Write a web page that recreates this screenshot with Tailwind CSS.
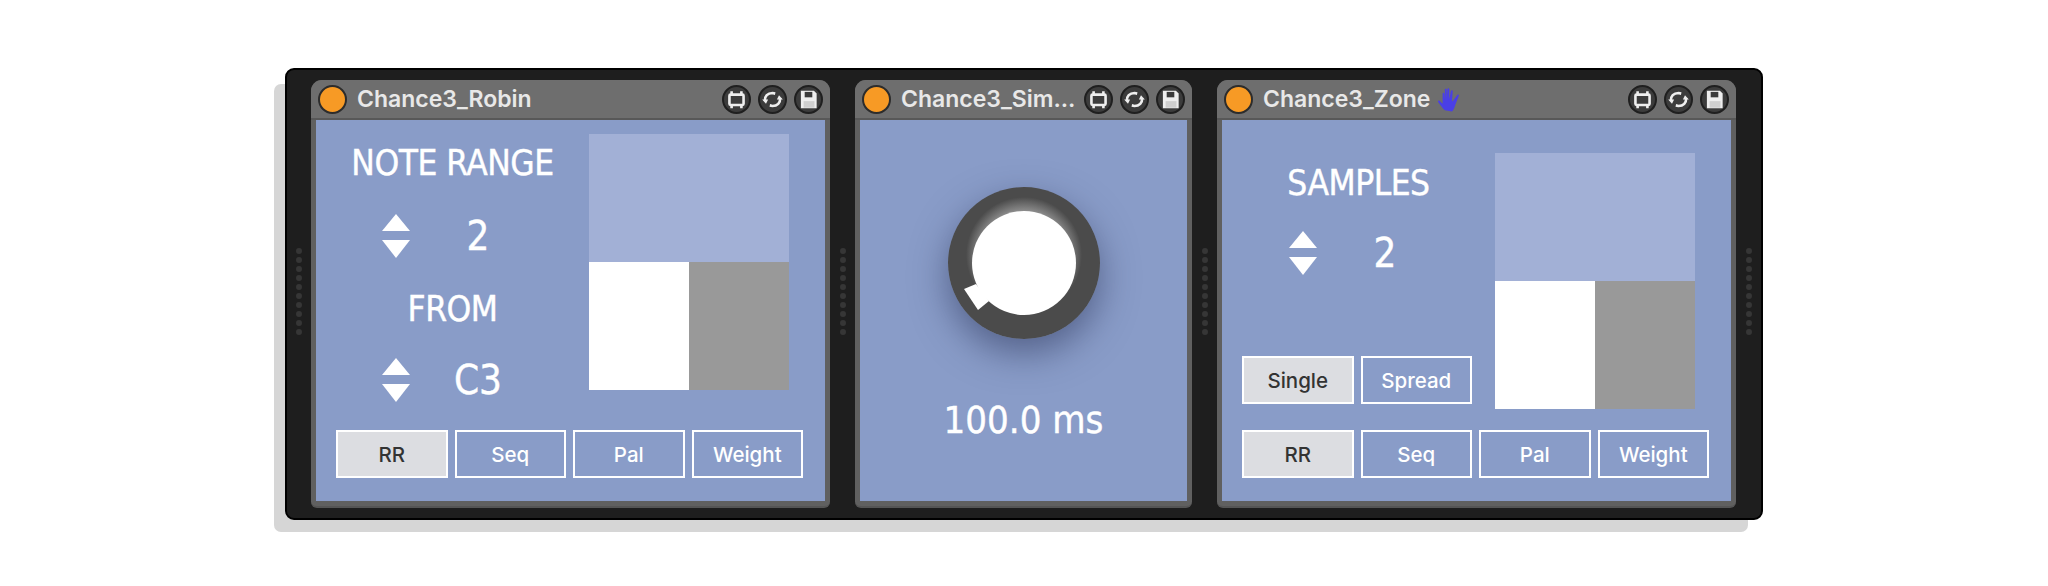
<!DOCTYPE html>
<html lang="en">
<head>
<meta charset="UTF-8">
<title>Chance3 devices</title>
<script src="https://cdn.jsdelivr.net/npm/@tailwindcss/browser@4"></script>
</head>
<body class="bg-white w-[2048px] h-[586px] overflow-hidden font-['Inter',sans-serif]">

<!-- shared icons -->
<svg width="0" height="0" class="absolute">
  <symbol id="ico-freeze" viewBox="3 3 23 23">
    <rect x="8" y="10" width="13" height="9.5" rx="1" fill="none" stroke="#eee" stroke-width="2.4"/>
    <path d="M10 7v3M19 7v3M10 19.500v3M19 19.500v3" stroke="#eee" stroke-width="2.400"/>
  </symbol>
  <symbol id="ico-sync" viewBox="3 3 23 23">
    <path d="M7.500 15.500c-.3-4 2.500-7 7-7l2.500.6" fill="none" stroke="#eee" stroke-width="2.400"/>
    <path d="M5 14.500l5.500 0-2 3.800z" fill="#eee"/>
    <path d="M21.500 13.500c.3 4-2.500 7-7 7l-2.500-.6" fill="none" stroke="#eee" stroke-width="2.400"/>
    <path d="M24 14.500l-5.500 0 2-3.800z" fill="#eee"/>
  </symbol>
  <symbol id="ico-save" viewBox="3 3 23 23">
    <path d="M7.500 6.500h12l2.500 2.500v13.500h-14.500z" fill="#eee"/>
    <rect x="11" y="7.500" width="7" height="5" fill="#3a3a3a"/>
    <rect x="10" y="16" width="10" height="6" fill="#cfcfcf"/>
  </symbol>
  <symbol id="ico-spin" viewBox="0 0 28 44">
    <path d="M14 0L28 17H0z" fill="#fff"/>
    <path d="M0 26H28L14 44z" fill="#fff"/>
  </symbol>
</svg>

<div class="ml-[285px] mt-[68px] w-[1478px] h-[452px] flex gap-[25px] pl-[24px] pt-[10px] bg-[#1e1e1e] border-2 border-black rounded-[9px] shadow-[-13px_14px_0_-2px_#d6d6d6] relative">

  <!-- grips -->
  <div class="absolute left-[9px] top-[178px] flex flex-col gap-[3px]">
    <i class="block w-[6px] h-[6px] rounded-full bg-[#363636]"></i><i class="block w-[6px] h-[6px] rounded-full bg-[#363636]"></i><i class="block w-[6px] h-[6px] rounded-full bg-[#363636]"></i><i class="block w-[6px] h-[6px] rounded-full bg-[#363636]"></i><i class="block w-[6px] h-[6px] rounded-full bg-[#363636]"></i><i class="block w-[6px] h-[6px] rounded-full bg-[#363636]"></i><i class="block w-[6px] h-[6px] rounded-full bg-[#363636]"></i><i class="block w-[6px] h-[6px] rounded-full bg-[#363636]"></i><i class="block w-[6px] h-[6px] rounded-full bg-[#363636]"></i><i class="block w-[6px] h-[6px] rounded-full bg-[#363636]"></i>
  </div>
  <div class="absolute left-[553px] top-[178px] flex flex-col gap-[3px]">
    <i class="block w-[6px] h-[6px] rounded-full bg-[#363636]"></i><i class="block w-[6px] h-[6px] rounded-full bg-[#363636]"></i><i class="block w-[6px] h-[6px] rounded-full bg-[#363636]"></i><i class="block w-[6px] h-[6px] rounded-full bg-[#363636]"></i><i class="block w-[6px] h-[6px] rounded-full bg-[#363636]"></i><i class="block w-[6px] h-[6px] rounded-full bg-[#363636]"></i><i class="block w-[6px] h-[6px] rounded-full bg-[#363636]"></i><i class="block w-[6px] h-[6px] rounded-full bg-[#363636]"></i><i class="block w-[6px] h-[6px] rounded-full bg-[#363636]"></i><i class="block w-[6px] h-[6px] rounded-full bg-[#363636]"></i>
  </div>
  <div class="absolute left-[915px] top-[178px] flex flex-col gap-[3px]">
    <i class="block w-[6px] h-[6px] rounded-full bg-[#363636]"></i><i class="block w-[6px] h-[6px] rounded-full bg-[#363636]"></i><i class="block w-[6px] h-[6px] rounded-full bg-[#363636]"></i><i class="block w-[6px] h-[6px] rounded-full bg-[#363636]"></i><i class="block w-[6px] h-[6px] rounded-full bg-[#363636]"></i><i class="block w-[6px] h-[6px] rounded-full bg-[#363636]"></i><i class="block w-[6px] h-[6px] rounded-full bg-[#363636]"></i><i class="block w-[6px] h-[6px] rounded-full bg-[#363636]"></i><i class="block w-[6px] h-[6px] rounded-full bg-[#363636]"></i><i class="block w-[6px] h-[6px] rounded-full bg-[#363636]"></i>
  </div>
  <div class="absolute left-[1459px] top-[178px] flex flex-col gap-[3px]">
    <i class="block w-[6px] h-[6px] rounded-full bg-[#363636]"></i><i class="block w-[6px] h-[6px] rounded-full bg-[#363636]"></i><i class="block w-[6px] h-[6px] rounded-full bg-[#363636]"></i><i class="block w-[6px] h-[6px] rounded-full bg-[#363636]"></i><i class="block w-[6px] h-[6px] rounded-full bg-[#363636]"></i><i class="block w-[6px] h-[6px] rounded-full bg-[#363636]"></i><i class="block w-[6px] h-[6px] rounded-full bg-[#363636]"></i><i class="block w-[6px] h-[6px] rounded-full bg-[#363636]"></i><i class="block w-[6px] h-[6px] rounded-full bg-[#363636]"></i><i class="block w-[6px] h-[6px] rounded-full bg-[#363636]"></i>
  </div>

  <!-- Chance3_Robin -->
  <section class="w-[519px] h-[428px] flex flex-col rounded-t-[11px] rounded-b-[6px] bg-[#606060] px-[5px] pb-[5px] border-b-2 border-[#555]">
    <header class="h-[40px] -mx-[5px] px-[7px] flex items-center rounded-t-[11px] bg-[#6e6e6e] border-b-2 border-[#585858] shrink-0">
      <span class="w-[29px] h-[29px] rounded-full bg-[#f79a25] border-2 border-[#2c2c2c]"></span>
      <span class="ml-[10px] pt-[1px] text-[23px] font-semibold text-[#e8e8e8]">Chance3_Robin</span>
      <div class="ml-auto flex gap-[7px]">
        <span class="w-[29px] h-[29px] rounded-full bg-[#3c3c3c] border-2 border-[#1f1f1f]"><svg class="w-full h-full"><use href="#ico-freeze"/></svg></span>
        <span class="w-[29px] h-[29px] rounded-full bg-[#3c3c3c] border-2 border-[#1f1f1f]"><svg class="w-full h-full"><use href="#ico-sync"/></svg></span>
        <span class="w-[29px] h-[29px] rounded-full bg-[#3c3c3c] border-2 border-[#1f1f1f]"><svg class="w-full h-full"><use href="#ico-save"/></svg></span>
      </div>
    </header>
    <div class="flex-1 bg-[#899cc8] pt-[14px]">
      <div class="flex h-[296px]">
        <div class="w-[273px] flex flex-col text-white font-['DejaVu_Sans',sans-serif] font-stretch-condensed [-webkit-text-stroke:0.4px_white]">
          <div class="h-[58px] flex items-center justify-center text-[35px] tracking-[-0.5px]">NOTE RANGE</div>
          <div class="h-[88px] flex items-center pl-[66px]">
            <svg class="w-[28px] h-[44px]"><use href="#ico-spin"/></svg>
            <span class="w-[136px] text-center text-[40px]">2</span>
          </div>
          <div class="h-[59px] flex items-center justify-center text-[35px] tracking-[-0.5px]">FROM</div>
          <div class="h-[82px] flex items-center pl-[66px]">
            <svg class="w-[28px] h-[44px]"><use href="#ico-spin"/></svg>
            <span class="w-[136px] text-center text-[40px]">C3</span>
          </div>
        </div>
        <div class="w-[200px] h-[256px] flex flex-col">
          <div class="h-[128px] bg-[#a2b0d6]"></div>
          <div class="flex-1 flex"><div class="w-1/2 bg-white"></div><div class="w-1/2 bg-[#999]"></div></div>
        </div>
      </div>
      <div class="flex gap-[7px] pl-[20px] text-[20.500px] font-medium">
        <button class="w-[111.500px] h-[48px] pt-[2px] border-2 border-white bg-[#dcdde1] text-[#333]">RR</button>
        <button class="w-[111.500px] h-[48px] pt-[2px] border-2 border-white text-white">Seq</button>
        <button class="w-[111.500px] h-[48px] pt-[2px] border-2 border-white text-white">Pal</button>
        <button class="w-[111.500px] h-[48px] pt-[2px] border-2 border-white text-white">Weight</button>
      </div>
    </div>
  </section>

  <!-- Chance3_Simple -->
  <section class="w-[337px] h-[428px] flex flex-col rounded-t-[11px] rounded-b-[6px] bg-[#606060] px-[5px] pb-[5px] border-b-2 border-[#555]">
    <header class="h-[40px] -mx-[5px] px-[7px] flex items-center rounded-t-[11px] bg-[#6e6e6e] border-b-2 border-[#585858] shrink-0">
      <span class="w-[29px] h-[29px] rounded-full bg-[#f79a25] border-2 border-[#2c2c2c]"></span>
      <span class="ml-[10px] pt-[1px] text-[23px] font-semibold text-[#e8e8e8] whitespace-nowrap">Chance3_Sim...</span>
      <div class="ml-auto flex gap-[7px]">
        <span class="w-[29px] h-[29px] rounded-full bg-[#3c3c3c] border-2 border-[#1f1f1f]"><svg class="w-full h-full"><use href="#ico-freeze"/></svg></span>
        <span class="w-[29px] h-[29px] rounded-full bg-[#3c3c3c] border-2 border-[#1f1f1f]"><svg class="w-full h-full"><use href="#ico-sync"/></svg></span>
        <span class="w-[29px] h-[29px] rounded-full bg-[#3c3c3c] border-2 border-[#1f1f1f]"><svg class="w-full h-full"><use href="#ico-save"/></svg></span>
      </div>
    </header>
    <div class="flex-1 bg-[#899cc8] pt-[67px] flex flex-col items-center">
      <div class="w-[152px] h-[152px] rounded-full shadow-[0_14px_36px_rgba(40,50,85,0.55)]">
        <svg viewBox="0 0 152 152" class="w-full h-full">
          <defs>
            <radialGradient id="knob-glow" cx="76" cy="68" r="58" gradientUnits="userSpaceOnUse">
              <stop offset="0.74" stop-color="#929292"/>
              <stop offset="1" stop-color="#4b4b4b"/>
            </radialGradient>
          </defs>
          <circle cx="76" cy="76" r="76" fill="#4b4b4b"/>
          <circle cx="76" cy="68" r="58" fill="url(#knob-glow)"/>
          <circle cx="76" cy="76" r="52" fill="#fff"/>
          <path d="M16 102L28 97L41 114L30 123Z" fill="#fff"/>
        </svg>
      </div>
      <div class="mt-[57px] h-[48px] flex items-center text-[38px] text-white font-['DejaVu_Sans',sans-serif] font-stretch-condensed [-webkit-text-stroke:0.4px_white]">100.0 ms</div>
    </div>
  </section>

  <!-- Chance3_Zone -->
  <section class="w-[519px] h-[428px] flex flex-col rounded-t-[11px] rounded-b-[6px] bg-[#606060] px-[5px] pb-[5px] border-b-2 border-[#555]">
    <header class="h-[40px] -mx-[5px] px-[7px] flex items-center rounded-t-[11px] bg-[#6e6e6e] border-b-2 border-[#585858] shrink-0">
      <span class="w-[29px] h-[29px] rounded-full bg-[#f79a25] border-2 border-[#2c2c2c]"></span>
      <span class="ml-[10px] pt-[1px] text-[23px] font-semibold text-[#e8e8e8]">Chance3_Zone</span>
      <svg viewBox="1 0 19.500 22.500" class="ml-[8px] w-[22px] h-[25px]" fill="#4a3fe6">
        <path d="M7 21c-2-2-3.500-4-6-7.500-.6-1 .6-1.800 1.500-1L5 15V6c0-1 1.500-1 1.600 0l.4 5V2.500c0-1.100 1.700-1.100 1.700 0V11l.6-9c.1-1.100 1.700-1 1.700.1V11l1.500-7.500c.2-1 1.700-.8 1.600.3L13.500 12l.4 1 4.500-6c.6-.8 1.700 0 1.200.9L16.500 16c-1 3-1.500 4.500-3 6z"/>
      </svg>
      <div class="ml-auto flex gap-[7px]">
        <span class="w-[29px] h-[29px] rounded-full bg-[#3c3c3c] border-2 border-[#1f1f1f]"><svg class="w-full h-full"><use href="#ico-freeze"/></svg></span>
        <span class="w-[29px] h-[29px] rounded-full bg-[#3c3c3c] border-2 border-[#1f1f1f]"><svg class="w-full h-full"><use href="#ico-sync"/></svg></span>
        <span class="w-[29px] h-[29px] rounded-full bg-[#3c3c3c] border-2 border-[#1f1f1f]"><svg class="w-full h-full"><use href="#ico-save"/></svg></span>
      </div>
    </header>
    <div class="flex-1 bg-[#899cc8] pt-[33px]">
      <div class="flex h-[277px]">
        <div class="w-[273px] flex flex-col text-white font-['DejaVu_Sans',sans-serif] font-stretch-condensed">
          <div class="h-[60px] flex items-center justify-center text-[35px] tracking-[-0.5px] [-webkit-text-stroke:0.4px_white]">SAMPLES</div>
          <div class="h-[80px] flex items-center pl-[67px]">
            <svg class="w-[28px] h-[44px]"><use href="#ico-spin"/></svg>
            <span class="w-[136px] text-center text-[40px] [-webkit-text-stroke:0.4px_white]">2</span>
          </div>
          <div class="mt-[63px] flex gap-[7px] pl-[20px] text-[20.500px] font-medium font-['Inter',sans-serif] font-stretch-normal">
            <button class="w-[111.500px] h-[48px] pt-[2px] border-2 border-white bg-[#dcdde1] text-[#333]">Single</button>
            <button class="w-[111.500px] h-[48px] pt-[2px] border-2 border-white text-white">Spread</button>
          </div>
        </div>
        <div class="w-[200px] h-[256px] flex flex-col">
          <div class="h-[128px] bg-[#a2b0d6]"></div>
          <div class="flex-1 flex"><div class="w-1/2 bg-white"></div><div class="w-1/2 bg-[#999]"></div></div>
        </div>
      </div>
      <div class="flex gap-[7px] pl-[20px] text-[20.500px] font-medium">
        <button class="w-[111.500px] h-[48px] pt-[2px] border-2 border-white bg-[#dcdde1] text-[#333]">RR</button>
        <button class="w-[111.500px] h-[48px] pt-[2px] border-2 border-white text-white">Seq</button>
        <button class="w-[111.500px] h-[48px] pt-[2px] border-2 border-white text-white">Pal</button>
        <button class="w-[111.500px] h-[48px] pt-[2px] border-2 border-white text-white">Weight</button>
      </div>
    </div>
  </section>
</div>
</body>
</html>
